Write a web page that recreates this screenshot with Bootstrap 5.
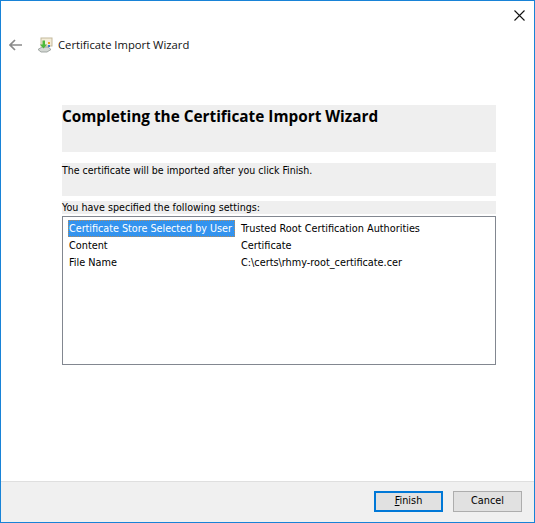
<!DOCTYPE html>
<html lang="en">
<head>
<meta charset="utf-8">
<title>Certificate Import Wizard</title>
<link href="https://cdn.jsdelivr.net/npm/bootstrap@5.3.0/dist/css/bootstrap.min.css" rel="stylesheet">
<style>
html, body { height: 100%; }
body { background: #fff; color: #000; font-family: "DejaVu Sans Condensed", "DejaVu Sans", sans-serif; font-stretch: condensed; font-size: 10.5px; overflow: hidden; }
.wiz-window { height: 523px; border: 1px solid #1883d7; }
.wiz-close-row { height: 29px; padding-right: 9px; padding-top: 8px; }
.wiz-close { background: none; border: 0; padding: 0; width: 12px; height: 12px; line-height: 0; }
.wiz-head { height: 30px; padding-left: 8px; }
.wiz-back { background: none; border: 0; padding: 0; width: 13px; height: 12px; line-height: 0; margin-right: 15px; }
.wiz-logo { margin-right: 5px; }
.wiz-title { font-family: "Open Sans", sans-serif; font-stretch: normal; font-size: 11.25px; color: #111; }
.wiz-body { padding: 45px 38px 0 61px; }
.wiz-panel { background: #efefef; }
.wiz-h { height: 47px; font-family: "Open Sans", sans-serif; font-stretch: normal; font-weight: 700; font-size: 15.35px; line-height: 22px; margin-bottom: 11px; }
.wiz-msg { height: 33px; line-height: 14px; margin-bottom: 5px; }
.wiz-label { height: 13px; line-height: 13px; margin-bottom: 2px; font-size: 10.65px; }
.wiz-list { height: 149px; border: 1px solid #828790; padding: 3px 5px 1px; background: #fff; font-size: 10.8px; }
.wiz-row { height: 17px; line-height: 17px; }
.wiz-k { width: 167px; padding-left: 1px; margin-right: 6px; white-space: nowrap; }
.wiz-sel { background: #3393ee; color: #fff; outline: 1px dotted rgba(232,134,30,.7); outline-offset: -1px; font-size: 10.7px; }
.wiz-foot { height: 41px; background: #f0f0f0; border-top: 1px solid #dfdfdf; padding-right: 12px; padding-top: 9px; gap: 10px; }
.wiz-btn { width: 69px; height: 21px; border-radius: 0; padding: 0; background: #e1e1e1; border: 1px solid #adadad; font-size: 10.8px; line-height: 1; color: #000; }
.wiz-btn-def { border: 2px solid #0078d7; }
.wiz-fill { flex: 1 1 auto; }
</style>
</head>
<body>
<div class="wiz-window d-flex flex-column">
  <div class="wiz-close-row d-flex justify-content-end">
    <button class="wiz-close" type="button" aria-label="Close">
      <svg width="11" height="11" viewBox="0 0 11 11"><path d="M.5.5l10 10M10.5.5l-10 10" stroke="#111" stroke-width="1.1" fill="none"/></svg>
    </button>
  </div>
  <div class="wiz-head d-flex align-items-center">
    <button class="wiz-back" type="button" aria-label="Back">
      <svg width="13" height="12" viewBox="0 0 13 12"><path d="M6 1L1 6l5 5M1.2 6H13" stroke="#8a8a8a" stroke-width="1.7" fill="none"/></svg>
    </button>
    <svg class="wiz-logo" width="16" height="16" viewBox="0 0 16 16">
      <rect x="4" y="1" width="11" height="8" fill="#f3ecd8" stroke="#c4b99c" stroke-width="1"/>
      <rect x="11" y="5" width="2" height="2" fill="#e8a021"/>
      <rect x="11" y="8" width="2" height="2" fill="#3a78c8"/>
      <path d="M1 12.5L5 10h6l3 2.500L10 15H4z" fill="#d4d8d4" stroke="#8e9690" stroke-width=".8"/>
      <path d="M5.500 3.500h2.500v4h2l-3.500 4-3.500-4h2.500z" fill="#4cb83a"/>
    </svg>
    <span class="wiz-title">Certificate Import Wizard</span>
  </div>
  <div class="wiz-body wiz-fill">
    <div class="wiz-panel wiz-h">Completing the Certificate Import Wizard</div>
    <div class="wiz-panel wiz-msg">The certificate will be imported after you click Finish.</div>
    <div class="wiz-panel wiz-label">You have specified the following settings:</div>
    <div class="wiz-list">
      <div class="wiz-row d-flex"><div class="wiz-k wiz-sel">Certificate Store Selected by User</div><div>Trusted Root Certification Authorities</div></div>
      <div class="wiz-row d-flex"><div class="wiz-k">Content</div><div>Certificate</div></div>
      <div class="wiz-row d-flex"><div class="wiz-k">File Name</div><div>C:\certs\rhmy-root_certificate.cer</div></div>
    </div>
  </div>
  <div class="wiz-foot d-flex justify-content-end">
    <button class="btn wiz-btn wiz-btn-def" type="button"><u>F</u>inish</button>
    <button class="btn wiz-btn" type="button">Cancel</button>
  </div>
</div>
</body>
</html>
